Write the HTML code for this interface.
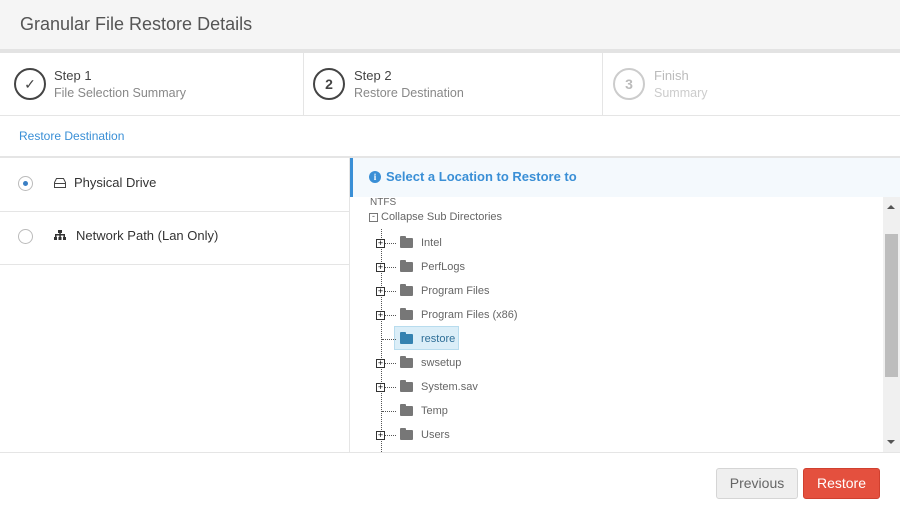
<!DOCTYPE html>
<html><head><style>
*{box-sizing:border-box;margin:0;padding:0}
body{width:900px;height:514px;overflow:hidden;background:#fff;font-family:"Liberation Sans",sans-serif;color:#333;position:relative}
.a{position:absolute}
.hdr{left:0;top:0;width:900px;background:#f5f5f5;font-size:18px;color:#555;padding:14px 20px;border-bottom:4px solid #e3e3e3;height:53px}
.circ{width:32px;height:32px;border:2px solid #444;border-radius:50%;text-align:center;line-height:28px;font-size:14px;font-weight:bold;color:#444}
.st{font-size:13px;color:#444}
.sub{font-size:12.5px;color:#888}
.tr{font-size:11px;color:#666}
.fold{width:13px;height:10px;background:#777;border-radius:1px}
.fold:before{content:"";position:absolute;left:0;top:-2px;width:6px;height:3px;background:inherit;border-radius:1px 1px 0 0}
.pl{width:9px;height:9px;border:1px solid #333;background:#fff;font-size:9px;line-height:7px;text-align:center;color:#000}
.dh{border-top:1px dotted #555;width:10px;height:0}
</style></head><body>
<div class="a hdr">Granular File Restore Details</div>
<div class="a" style="left:0;top:115px;width:900px;border-top:1px solid #e5e5e5"></div>
<div class="a" style="left:303px;top:53px;height:62px;border-left:1px solid #e5e5e5"></div>
<div class="a" style="left:602px;top:53px;height:62px;border-left:1px solid #e5e5e5"></div>
<div class="a circ" style="left:14px;top:68px;font-weight:normal">✓</div>
<div class="a st" style="left:54px;top:68px">Step 1</div><div class="a sub" style="left:54px;top:86px">File Selection Summary</div>
<div class="a circ" style="left:313px;top:68px">2</div>
<div class="a st" style="left:354px;top:68px">Step 2</div><div class="a sub" style="left:354px;top:86px">Restore Destination</div>
<div class="a circ" style="left:613px;top:68px;border-color:#ccc;color:#bbb">3</div>
<div class="a st" style="left:654px;top:68px;color:#bbb">Finish</div><div class="a sub" style="left:654px;top:86px;color:#ccc">Summary</div>
<div class="a" style="left:19px;top:129px;font-size:12px;color:#3a8fd6">Restore Destination</div>
<div class="a" style="left:0;top:156px;width:900px;border-top:2px solid #e5e5e5"></div>
<div class="a" style="left:349px;top:158px;height:294px;border-left:1px solid #e5e5e5"></div>
<div class="a" style="left:0;top:211px;width:349px;border-top:1px solid #e5e5e5"></div>
<div class="a" style="left:0;top:264px;width:349px;border-top:1px solid #e5e5e5"></div>
<div class="a" style="left:18px;top:176px;width:15px;height:15px;border:1px solid #bbb;border-radius:50%"><div class="a" style="left:4px;top:4px;width:5px;height:5px;background:#3a7fc4;border-radius:50%"></div></div>
<div class="a" style="left:18px;top:229px;width:15px;height:15px;border:1px solid #bbb;border-radius:50%"></div>
<svg class="a" style="left:54px;top:178px" width="12" height="10"><path d="M0.5 4.5 L2.5 0.5 H9.5 L11.5 4.5 V9.5 H0.5 Z M0.5 5.5 H11.5" fill="none" stroke="#444"/></svg>
<div class="a" style="left:74px;top:175px;font-size:13px">Physical Drive</div>
<svg class="a" style="left:54px;top:230px" width="12" height="11"><rect x="4" y="0" width="4" height="3" fill="#333"/><rect x="1" y="4" width="10" height="1.5" fill="#333"/><rect x="1" y="4" width="1.5" height="3" fill="#333"/><rect x="5.3" y="3" width="1.5" height="4" fill="#333"/><rect x="9.5" y="4" width="1.5" height="3" fill="#333"/><rect x="0" y="7" width="3" height="3" fill="#333"/><rect x="4.5" y="7" width="3" height="3" fill="#333"/><rect x="9" y="7" width="3" height="3" fill="#333"/></svg>
<div class="a" style="left:76px;top:228px;font-size:13px">Network Path (Lan Only)</div>
<div class="a" style="left:350px;top:158px;width:550px;height:39px;background:#f4f9fd;border-left:3px solid #3a8fd6"></div>
<div class="a" style="left:369px;top:171px;width:12px;height:12px;border-radius:50%;background:#3a8fd6;color:#fff;font-size:9px;font-weight:bold;text-align:center;line-height:12px;font-family:'Liberation Serif',serif">i</div>
<div class="a" style="left:386px;top:169px;font-size:13px;color:#3a8fd6;font-weight:bold">Select a Location to Restore to</div>
<div class="a tr" style="left:370px;top:197px;font-size:10px">NTFS</div>
<div class="a" style="left:369px;top:213px;width:9px;height:9px;border:1px solid #777;font-size:9px;line-height:5px;text-align:center;color:#555">-</div>
<div class="a tr" style="left:381px;top:211px">Collapse Sub Directories</div>
<div class="a" style="left:381px;top:229px;height:223px;border-left:1px dotted #555"></div>
<div class="a" style="left:394px;top:326px;width:65px;height:24px;background:#dbeef8;border:1px solid #b8dcee"></div>
<div id="t"></div>
<script>
var n=["Intel","PerfLogs","Program Files","Program Files (x86)","restore","swsetup","System.sav","Temp","Users"],h="";
n.forEach(function(s,i){var y=243+i*24,leaf=(s=="restore"||s=="Temp");
h+='<div class="a dh" style="left:382px;top:'+y+'px;width:14px"></div>';
if(!leaf)h+='<div class="a pl" style="left:376px;top:'+(y-4)+'px">+</div>';
var c=s=="restore"?"#3582b0":"#777";
h+='<div class="a fold" style="left:400px;top:'+(y-5)+'px;background:'+c+'"></div>';
h+='<div class="a tr" style="left:421px;top:'+(y-6)+'px;'+(s=="restore"?'color:#2f6f98':'')+'">'+s+'</div>';});
document.getElementById("t").innerHTML=h;
</script>
<div class="a" style="left:883px;top:197px;width:17px;height:255px;background:#f0f0f0"></div>
<div class="a" style="left:885px;top:234px;width:13px;height:143px;background:#bdbdbd"></div>
<div class="a" style="left:887px;top:205px;border:4px solid transparent;border-bottom:4px solid #555;border-top:0"></div>
<div class="a" style="left:887px;top:440px;border:4px solid transparent;border-top:4px solid #555;border-bottom:0"></div>
<div class="a" style="left:0;top:452px;width:900px;border-top:1px solid #e5e5e5"></div>
<div class="a" style="left:716px;top:468px;width:82px;height:31px;background:#efefef;border:1px solid #d5d5d5;border-radius:3px;font-size:14px;color:#666;text-align:center;line-height:29px">Previous</div>
<div class="a" style="left:803px;top:468px;width:77px;height:31px;background:#e4503e;border:1px solid #d0402f;border-radius:3px;font-size:14px;color:#fff;text-align:center;line-height:29px">Restore</div>
</body></html>
